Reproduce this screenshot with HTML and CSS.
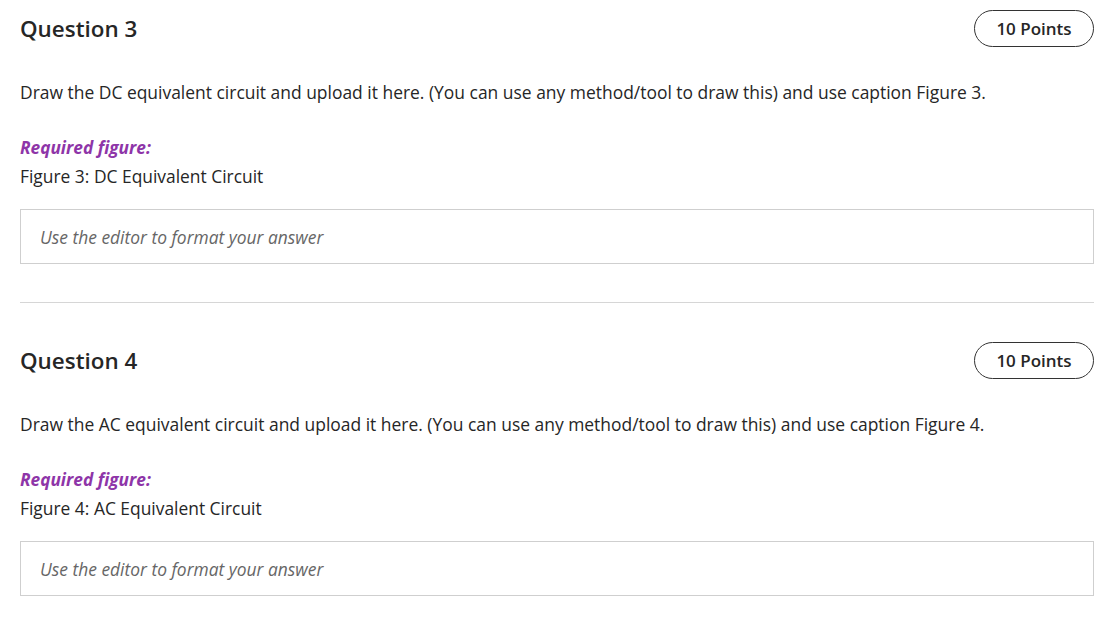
FILE: index.html
```html
<!DOCTYPE html>
<html>
<head>
<meta charset="utf-8">
<link rel="stylesheet" href="styles.css">
</head>
<body>
<main class="page">
  <section class="question">
    <header class="q-head">
      <h2 class="q-title">Question 3</h2>
      <span class="points">10 Points</span>
    </header>
    <p class="q-text">Draw the DC equivalent circuit and upload it here. (You can use any method/tool to draw this) and use caption Figure 3.</p>
    <p class="req-label">Required figure:</p>
    <p class="req-caption">Figure 3: DC Equivalent Circuit</p>
    <div class="editor">Use the editor to format your answer</div>
  </section>
  <hr class="divider">
  <section class="question">
    <header class="q-head">
      <h2 class="q-title">Question 4</h2>
      <span class="points">10 Points</span>
    </header>
    <p class="q-text">Draw the AC equivalent circuit and upload it here. (You can use any method/tool to draw this) and use caption Figure 4.</p>
    <p class="req-label">Required figure:</p>
    <p class="req-caption">Figure 4: AC Equivalent Circuit</p>
    <div class="editor">Use the editor to format your answer</div>
  </section>
</main>
</body>
</html>
```

FILE: styles.css
```css
html, body {
  margin: 0;
  padding: 0;
  background: #ffffff;
}
body {
  font-family: "Open Sans", "Noto Sans", sans-serif;
  color: #262626;
}
.page {
  padding: 10px 22px 0 20px;
}
.question {
  display: flex;
  flex-direction: column;
}
.q-head {
  display: flex;
  justify-content: space-between;
  align-items: center;
  height: 37px;
}
.q-title {
  margin: 0;
  font-size: 22.4px;
  font-weight: 600;
  color: #262626;
}
.points {
  box-sizing: border-box;
  height: 37px;
  width: 120px;
  border: 1px solid #333;
  border-radius: 19px;
  display: flex;
  align-items: center;
  justify-content: center;
  font-size: 17px;
  font-weight: 600;
  color: #262626;
}
.q-text {
  margin: 31px 0 0;
  font-size: 17.45px;
  line-height: 28px;
}
.req-label {
  margin: 28px 0 0;
  font-size: 17.3px;
  line-height: 28px;
  font-weight: 700;
  font-style: italic;
  color: #8e35a8;
}
.req-caption {
  margin: 0;
  font-size: 17.4px;
  line-height: 28px;
}
.editor {
  margin-top: 19px;
  box-sizing: border-box;
  height: 55px;
  border: 1px solid #cfcfcf;
  padding: 0 19px;
  display: flex;
  align-items: center;
  font-size: 17.4px;
  font-style: italic;
  color: #666;
}
.divider {
  margin: 38px 0 39px;
  border: 0;
  border-top: 1px solid #d6d6d6;
  height: 0;
}
```
